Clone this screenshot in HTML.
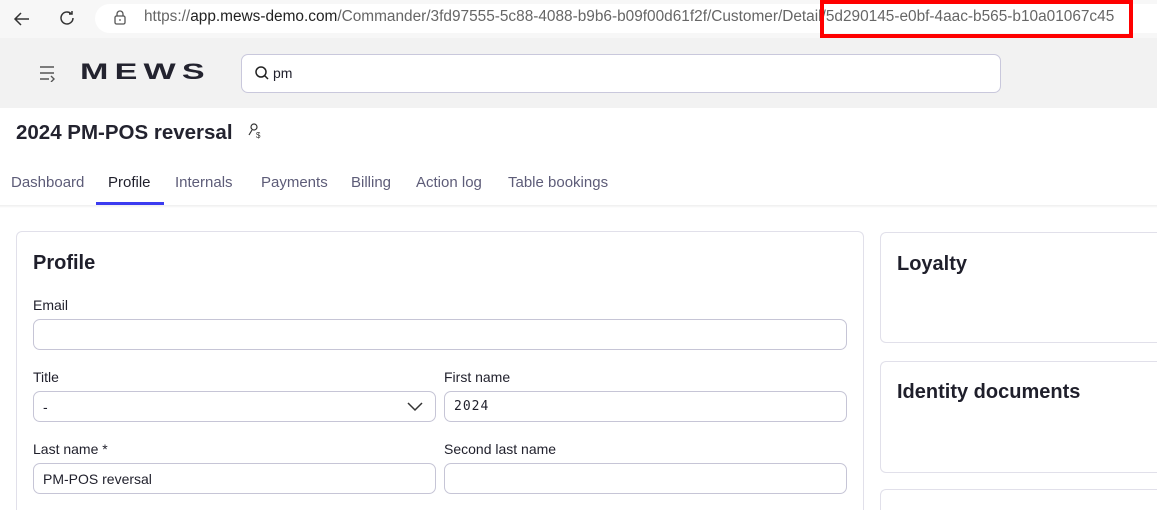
<!DOCTYPE html>
<html><head><style>
*{box-sizing:border-box;margin:0;padding:0}
html,body{width:1157px;height:510px;overflow:hidden}
body{font-family:"Liberation Sans",sans-serif;background:#fff;color:#1f1f2b}
#w{position:relative;width:1157px;height:510px;overflow:hidden}
.abs{position:absolute}
.lbl{position:absolute;font-size:14px;color:#1f1f2b}
.inp{position:absolute;height:31px;border:1px solid #c6c5d6;border-radius:7px;background:#fff;font-size:14px;padding:7px 9px}
.tab{position:absolute;top:174px;font-size:15px;color:#5d5c78}
.card{position:absolute;border:1px solid #e1e0ea;border-radius:6px;background:#fff}
</style></head><body><div id="w">
<div class="abs" style="left:0;top:0;width:1157px;height:38px;background:#f7f7f7"></div>
<svg class="abs" style="left:12px;top:9px" width="20" height="20" viewBox="0 0 20 20"><path d="M17 10H3M9 4l-6 6 6 6" stroke="#333" stroke-width="1.5" fill="none"/></svg>
<svg class="abs" style="left:57px;top:8px" width="20" height="20" viewBox="0 0 20 20"><path d="M16 10a6 6 0 1 1-2-4.5M15 3v3h-3" stroke="#333" stroke-width="1.5" fill="none"/></svg>
<div class="abs" style="left:95px;top:4px;width:1062px;height:29px;background:#fff;border-radius:15px 0 0 15px"></div>
<svg class="abs" style="left:113px;top:10px" width="14" height="16" viewBox="0 0 14 16"><rect x="2" y="6" width="10" height="8" rx="1.5" stroke="#555" stroke-width="1.3" fill="none"/><path d="M4 6V4a3 3 0 0 1 6 0v2" stroke="#555" stroke-width="1.3" fill="none"/><circle cx="7" cy="10" r="0.9" fill="#555"/></svg>
<div class="abs" style="left:144px;top:8px;font-size:15.4px;color:#666;white-space:nowrap">https://<span style="color:#222">app.mews-demo.com</span>/Commander/3fd97555-5c88-4088-b9b6-b09f00d61f2f/Customer/Detail/5d290145-e0bf-4aac-b565-b10a01067c45</div>
<div class="abs" style="left:820px;top:0;width:313px;height:38px;border:4px solid #f00"></div>
<div class="abs" style="left:0;top:38px;width:1157px;height:70px;background:#f2f2f2"></div>
<svg class="abs" style="left:38px;top:64px" width="20" height="18" viewBox="0 0 20 18"><path d="M2 3h14M2 9h14M2 15h9M13 12l3 3-3 3" stroke="#555" stroke-width="1.4" fill="none"/></svg>
<div class="abs" style="left:80px;top:59px;font-size:22px;font-weight:bold;letter-spacing:4px;color:#23232f;transform:scaleX(1.55);transform-origin:0 0">MEWS</div>
<div class="abs" style="left:241px;top:54px;width:760px;height:39px;background:#fff;border:1px solid #c9c8dc;border-radius:7px"></div>
<svg class="abs" style="left:254px;top:65px" width="16" height="16" viewBox="0 0 16 16"><circle cx="7" cy="7" r="5" stroke="#222" stroke-width="1.5" fill="none"/><path d="M10.5 10.5l3.5 3.5" stroke="#222" stroke-width="1.5"/></svg>
<div class="abs" style="left:273px;top:65px;font-size:14px">pm</div>
<div class="abs" style="left:16px;top:121px;font-size:20.5px;font-weight:bold;color:#23232f">2024 PM-POS reversal</div>
<svg class="abs" style="left:248px;top:123px" width="14" height="16" viewBox="0 0 14 16"><circle cx="6" cy="4" r="3" stroke="#333" stroke-width="1.2" fill="none"/><path d="M1 12l3-5" stroke="#333" stroke-width="1.2"/><text x="8" y="15" font-size="8" fill="#333" font-family="Liberation Sans">$</text></svg>
<div class="tab" style="left:11px">Dashboard</div>
<div class="tab" style="left:108px;color:#1f1f2b">Profile</div>
<div class="tab" style="left:175px">Internals</div>
<div class="tab" style="left:261px">Payments</div>
<div class="tab" style="left:351px">Billing</div>
<div class="tab" style="left:416px">Action log</div>
<div class="tab" style="left:508px">Table bookings</div>
<div class="abs" style="left:96px;top:202px;width:68px;height:3px;background:#3b3bf0"></div>
<div class="abs" style="left:0;top:205px;width:1157px;height:3px;background:linear-gradient(#eee,#fff)"></div>
<div class="card" style="left:16px;top:231px;width:848px;height:279px;border-bottom:none;border-radius:6px 6px 0 0"></div>
<div class="abs" style="left:33px;top:252px;font-size:20px;font-weight:bold">Profile</div>
<div class="lbl" style="left:33px;top:297px">Email</div>
<div class="inp" style="left:33px;top:319px;width:814px"></div>
<div class="lbl" style="left:33px;top:369px">Title</div>
<div class="inp" style="left:33px;top:391px;width:403px">-</div>
<svg class="abs" style="left:406px;top:400px" width="18" height="12" viewBox="0 0 18 12"><path d="M2 3l7 7 7-7" stroke="#333" stroke-width="1.5" fill="none"/></svg>
<div class="lbl" style="left:444px;top:369px">First name</div>
<div class="inp" style="left:444px;top:391px;width:403px;font-family:'DejaVu Sans Mono',monospace;font-size:13px;letter-spacing:1px">2024</div>
<div class="lbl" style="left:33px;top:441px">Last name *</div>
<div class="inp" style="left:33px;top:463px;width:403px">PM-POS reversal</div>
<div class="lbl" style="left:444px;top:441px">Second last name</div>
<div class="inp" style="left:444px;top:463px;width:403px"></div>
<div class="card" style="left:880px;top:232px;width:277px;height:111px;border-right:none;border-radius:6px 0 0 6px"></div>
<div class="abs" style="left:897px;top:253px;font-size:20px;font-weight:bold">Loyalty</div>
<div class="card" style="left:880px;top:361px;width:277px;height:112px;border-right:none;border-radius:6px 0 0 6px"></div>
<div class="abs" style="left:897px;top:381px;font-size:20px;font-weight:bold">Identity documents</div>
<div class="card" style="left:880px;top:489px;width:277px;height:21px;border-right:none;border-bottom:none;border-radius:6px 0 0 0"></div>
</div></body></html>
